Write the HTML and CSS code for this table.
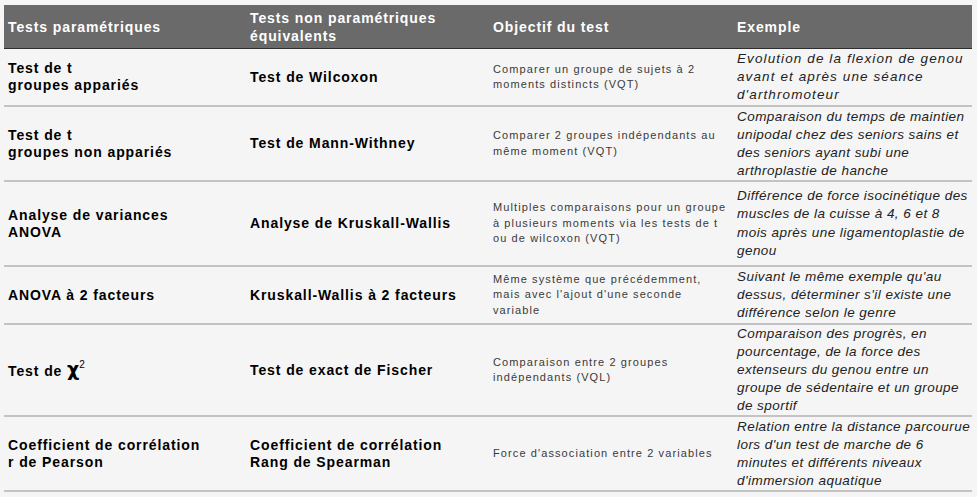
FILE: index.html
```html
<!DOCTYPE html>
<html lang="fr">
<head>
<meta charset="utf-8">
<title>Tests</title>
<link rel="stylesheet" href="styles.css">
</head>
<body>
<table class="tests">
  <colgroup>
    <col class="c1"><col class="c2"><col class="c3"><col class="c4">
  </colgroup>
  <thead>
    <tr class="head">
      <th>Tests paramétriques</th>
      <th>Tests non paramétriques<br>équivalents</th>
      <th>Objectif du test</th>
      <th>Exemple</th>
    </tr>
  </thead>
  <tbody>
    <tr class="r1">
      <td class="b">Test de t<br>groupes appariés</td>
      <td class="b">Test de Wilcoxon</td>
      <td class="obj">Comparer un groupe de sujets à 2<br>moments distincts  (VQT)</td>
      <td class="ex wide">Evolution de la flexion de genou<br>avant et après une séance<br>d'arthromoteur</td>
    </tr>
    <tr class="r2">
      <td class="b">Test de t<br>groupes non appariés</td>
      <td class="b">Test de Mann-Withney</td>
      <td class="obj">Comparer 2 groupes indépendants au<br>même moment  (VQT)</td>
      <td class="ex">Comparaison du temps de maintien<br>unipodal chez des seniors sains et<br>des seniors ayant subi une<br>arthroplastie de hanche</td>
    </tr>
    <tr class="r3">
      <td class="b">Analyse de variances<br>ANOVA</td>
      <td class="b">Analyse de Kruskall-Wallis</td>
      <td class="obj">Multiples comparaisons pour un groupe<br>à plusieurs moments via les tests de t<br>ou de wilcoxon (VQT)</td>
      <td class="ex">Différence de force isocinétique des<br>muscles de la cuisse à 4, 6 et 8<br>mois après une ligamentoplastie de<br>genou</td>
    </tr>
    <tr class="r4">
      <td class="b">ANOVA à 2 facteurs</td>
      <td class="b">Kruskall-Wallis à 2 facteurs</td>
      <td class="obj">Même système que précédemment,<br>mais avec l'ajout d'une seconde<br>variable</td>
      <td class="ex">Suivant le même exemple qu'au<br>dessus, déterminer s'il existe une<br>différence selon le genre</td>
    </tr>
    <tr class="r5">
      <td class="b">Test de <span class="chi">χ</span><sup class="sq">2</sup></td>
      <td class="b">Test de exact de Fischer</td>
      <td class="obj">Comparaison entre 2 groupes<br>indépendants (VQL)</td>
      <td class="ex">Comparaison des progrès, en<br>pourcentage, de la force des<br>extenseurs du genou entre un<br>groupe de sédentaire et un groupe<br>de sportif</td>
    </tr>
    <tr class="r6">
      <td class="b">Coefficient de corrélation<br>r de Pearson</td>
      <td class="b">Coefficient de corrélation<br>Rang de Spearman</td>
      <td class="obj">Force d'association entre 2 variables</td>
      <td class="ex">Relation entre la distance parcourue<br>lors d'un test de marche de 6<br>minutes et différents niveaux<br>d'immersion aquatique</td>
    </tr>
  </tbody>
</table>
</body>
</html>
```
FILE: styles.css
```css
html, body {
  margin: 0;
  padding: 0;
  background: #f5f5f5;
}
body {
  font-family: "Liberation Sans", Arial, sans-serif;
  color: #000;
}
.tests {
  margin: 5px 0 0 4px;
  width: 968px;
  border-collapse: collapse;
  table-layout: fixed;
}
.c1 { width: 242px; }
.c2 { width: 243px; }
.c3 { width: 244px; }
.c4 { width: 239px; }
.tests th {
  background: #6a6a6a;
  color: #fff;
  font-weight: bold;
  font-size: 14px;
  line-height: 18px;
  letter-spacing: 0.9px;
  text-align: left;
  vertical-align: middle;
  padding: 0 4px;
  height: 43px;
  border-bottom: 1px solid #2e2e2e;
  white-space: nowrap;
}
.tests td {
  padding: 0 4px;
  vertical-align: middle;
  border-bottom: 2px solid #c3c3c3;
  white-space: nowrap;
}
.r1 td { height: 56px; }
.r2 td { height: 73px; }
.r3 td { height: 83px; }
.r4 td { height: 56px; }
.r5 td { height: 90px; }
.r6 td { height: 73px; }
.b {
  font-weight: bold;
  font-size: 14px;
  line-height: 17px;
  letter-spacing: 0.9px;
  color: #000;
}
.obj {
  font-size: 11px;
  line-height: 15.5px;
  letter-spacing: 1.1px;
  color: #3a3a3a;
}
.ex {
  font-style: italic;
  font-size: 13.5px;
  line-height: 18px;
  letter-spacing: 0.45px;
  color: #222;
}
.ex.wide { letter-spacing: 1.1px; }
.r3 .ex { line-height: 18.5px; }
.chi {
  font-family: "DejaVu Sans", sans-serif;
  font-size: 19px;
  font-weight: bold;
  letter-spacing: 0;
}
.sq {
  font-size: 10px;
  font-weight: normal;
  vertical-align: 8px;
  line-height: 0;
  letter-spacing: 0;
}
```
